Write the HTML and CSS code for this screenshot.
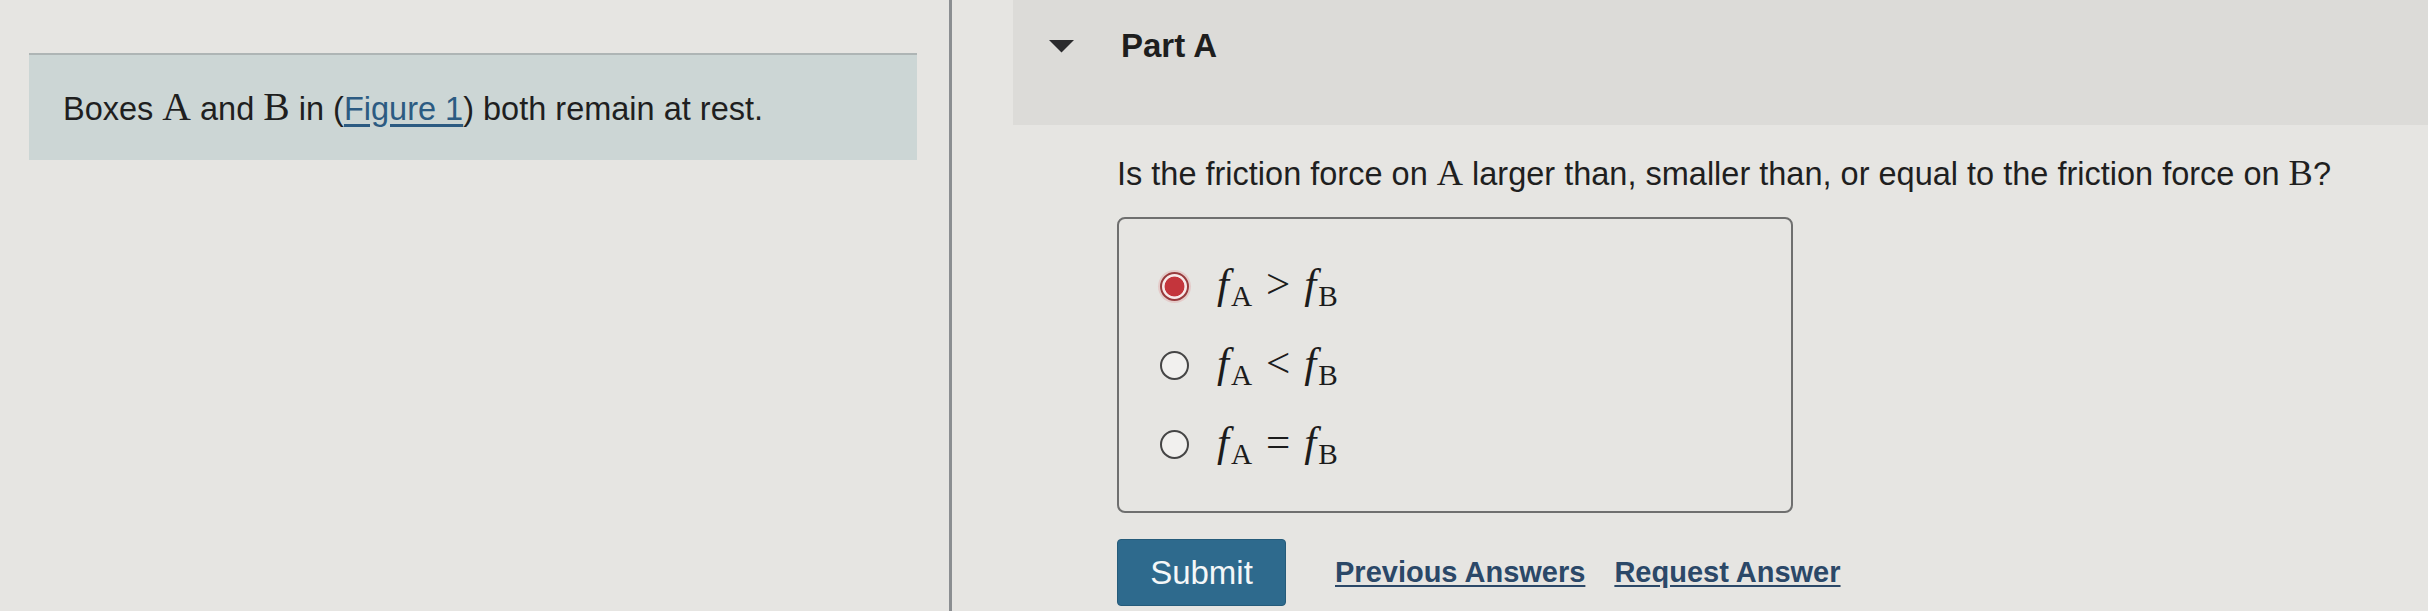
FILE: index.html
```html
<!DOCTYPE html>
<html lang="en">
<head>
<meta charset="utf-8">
<title>Part A</title>
<link rel="stylesheet" href="styles.css">
</head>
<body>
<div class="page">
  <aside class="left">
    <div class="intro">Boxes <span class="m">A</span> and <span class="m">B</span> in (<a class="fig" href="#">Figure 1</a>) both remain at rest.</div>
  </aside>
  <main class="right">
    <div class="part-head">
      <svg class="caret" width="27" height="14" viewBox="0 0 27 14"><path d="M1 1 H26 L13.5 13.5 Z" fill="#2b2b2d"/></svg>
      <h2 class="part-title">Part A</h2>
    </div>
    <div class="part-body">
      <p class="question">Is the friction force on <span class="m">A</span> larger than, smaller than, or equal to the friction force on <span class="m">B</span>?</p>
      <div class="choices">
        <label class="choice"><span class="radio checked"></span><span class="math"><i>f</i><sub>A</sub><span class="op">&gt;</span><i>f</i><sub>B</sub></span></label>
        <label class="choice"><span class="radio"></span><span class="math"><i>f</i><sub>A</sub><span class="op">&lt;</span><i>f</i><sub>B</sub></span></label>
        <label class="choice"><span class="radio"></span><span class="math"><i>f</i><sub>A</sub><span class="op">=</span><i>f</i><sub>B</sub></span></label>
      </div>
      <div class="actions">
        <button class="submit" type="button">Submit</button>
        <a class="action-link" href="#">Previous Answers</a>
        <a class="action-link" href="#">Request Answer</a>
      </div>
    </div>
  </main>
</div>
</body>
</html>
```
FILE: styles.css
```css
html, body {
  margin: 0;
  padding: 0;
  height: 100%;
}
body {
  background: #e6e5e2;
  font-family: "Liberation Sans", Arial, sans-serif;
  color: #1f1f1f;
}
.page {
  display: flex;
  height: 100%;
}
.left {
  width: 949px;
  flex: none;
  border-right: 3px solid #8b8e91;
}
.intro {
  margin: 53px 0 0 29px;
  width: 854px;
  border-top: 2px solid #aeb5b5;
  background: #ccd6d5;
  padding: 33px 0 31px 34px;
  font-size: 32.5px;
  line-height: 40px;
  white-space: nowrap;
}
.m {
  font-family: "Liberation Serif", "Times New Roman", serif;
  font-size: 1.22em;
  line-height: 1;
}
.fig {
  color: #2c5b82;
  text-decoration: underline;
  text-underline-offset: 4px;
}
.right {
  flex: 1;
  padding-left: 61px;
}
.part-head {
  display: flex;
  align-items: center;
  background: #dcdbd8;
  height: 125px;
  box-sizing: border-box;
  padding: 26px 0 59px 35px;
}
.caret {
  display: block;
  margin-right: 46px;
}
.part-title {
  margin: 0;
  font-size: 33px;
  line-height: 40px;
  font-weight: bold;
  color: #1e1e1e;
}
.part-body {
  padding-left: 104px;
}
.question {
  margin: 30px 0 0;
  font-size: 32.5px;
  line-height: 38px;
  white-space: nowrap;
}
.question .m {
  font-size: 1.12em;
}
.choices {
  margin-top: 24px;
  width: 672px;
  border: 2px solid #6f6f6f;
  border-radius: 8px;
  padding: 28px 0 27px;
}
.choice {
  display: flex;
  align-items: center;
  height: 79px;
  padding-left: 41px;
}
.radio {
  width: 29px;
  height: 29px;
  box-sizing: border-box;
  border: 2px solid #454545;
  border-radius: 50%;
  background: #f1f0ee;
  margin-right: 28px;
  flex: none;
}
.radio.checked {
  border-color: #983a3c;
  background: radial-gradient(circle, #c4353c 0 9.5px, #f7e8e8 10.3px);
  box-shadow: 0 0 0 2px rgba(226, 170, 170, 0.45);
}
.math {
  font-family: "Liberation Serif", "Times New Roman", serif;
  font-size: 43px;
  line-height: 1;
  color: #1c1c1c;
  white-space: nowrap;
}
.math i {
  font-style: italic;
}
.math sub {
  font-size: 0.68em;
  vertical-align: -0.26em;
  margin-left: 2px;
}
.op {
  margin: 0 14px;
}
.actions {
  display: flex;
  align-items: center;
  margin-top: 26px;
}
.submit {
  width: 169px;
  height: 67px;
  background: #2e6a8d;
  border: 1px solid #255b7a;
  border-radius: 4px;
  color: #f4f7f8;
  font-family: "Liberation Sans", Arial, sans-serif;
  font-size: 33px;
  padding: 0;
  margin-right: 49px;
}
.action-link {
  font-size: 29px;
  font-weight: bold;
  color: #2b4868;
  text-decoration: underline;
  text-underline-offset: 3px;
  margin-right: 29px;
}
```
